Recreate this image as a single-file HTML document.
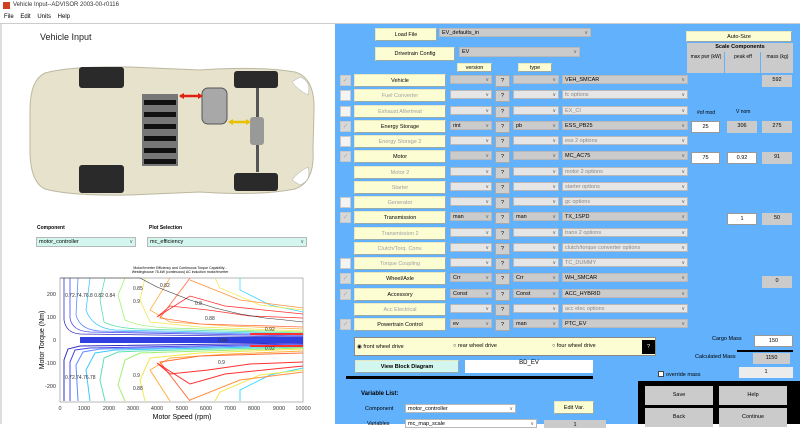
<!DOCTYPE html>
<html><head><meta charset="utf-8"><style>
*{box-sizing:border-box;margin:0;padding:0}
body{width:800px;height:424px;overflow:hidden;background:#fff;font-family:"Liberation Sans",sans-serif;position:relative}
.a{position:absolute}
.btn{position:absolute;background:#fdfdd4;border:1px solid #e8e8c0;border-right-color:#9aa;border-bottom-color:#9aa;font-size:5.5px;display:flex;align-items:center;justify-content:center;color:#000}
.dis{color:#a0a0a0}
.dd{position:absolute;background:#cbcbcb;border:1px solid #b8b8b8;font-size:5.5px;padding-left:2px;line-height:8px;color:#000}
.dd:after{content:"\2228";position:absolute;right:2px;top:0;font-size:5px;color:#666}
.ddl{background:#e6e6e6;color:#888}
.q{position:absolute;background:#cfcfcf;border:1px solid #aaa;font-size:5.5px;display:flex;align-items:center;justify-content:center}
.cb{position:absolute;width:11px;height:11px;background:#d8d8d8;border:1px solid #c8c8c8;font-size:7px;color:#aaa;text-align:center;line-height:9px}
.cbu{background:#f4f4f4}
.gb{position:absolute;background:#cbcbcb;font-size:5.5px;text-align:center;padding-top:2px}
.wb{position:absolute;background:#fff;border:1px solid #999;font-size:5.5px;display:flex;align-items:center;justify-content:center}
.lb{position:absolute;font-size:5.5px}
</style></head><body>
<div class="a" style="left:3px;top:2px;width:7px;height:7px;background:#d04020"></div>
<div class="lb" style="left:13px;top:2px;font-size:6px;color:#333">Vehicle Input--ADVISOR 2003-00-r0116</div>
<div class="lb" style="left:4px;top:14px;font-size:6px">File&nbsp;&nbsp;&nbsp;&nbsp;Edit&nbsp;&nbsp;&nbsp;&nbsp;Units&nbsp;&nbsp;&nbsp;&nbsp;Help</div>
<div class="a" style="left:0;top:23px;width:800px;height:1px;background:#ccc"></div>
<div class="a" style="left:0;top:24px;width:2px;height:400px;background:#ddd"></div>
<div class="lb" style="left:40px;top:32px;font-size:9px;color:#222">Vehicle Input</div>
<svg class="a" style="left:0;top:60px" width="335" height="145" viewBox="0 60 335 145">
<path d="M45,73 Q70,66 130,67 L200,70 Q260,66 295,72 Q315,78 314,110 L313,150 Q315,182 295,189 Q260,196 200,192 L130,195 Q70,196 45,189 Q30,182 30,150 L30,110 Q30,80 45,73Z" fill="#e6e2cc" stroke="#bcb8a0"/>
<path d="M300,77 Q312,82 308,95 Q298,90 292,82Z" fill="#fff" stroke="#aaa" stroke-width=".5"/>
<path d="M300,185 Q312,180 308,167 Q298,172 292,180Z" fill="#fff" stroke="#aaa" stroke-width=".5"/>
<rect x="79" y="67" width="45" height="21" rx="3" fill="#2a2a2a"/>
<rect x="79" y="165" width="45" height="28" rx="3" fill="#2a2a2a"/>
<rect x="234" y="71" width="44" height="17" rx="3" fill="#2a2a2a"/>
<rect x="234" y="173" width="44" height="18" rx="3" fill="#2a2a2a"/>
<rect x="142" y="94" width="36" height="72" fill="#777"/>
<g fill="#111"><rect x="144" y="100" width="32" height="5"/><rect x="144" y="112" width="32" height="5"/><rect x="144" y="124" width="32" height="5"/><rect x="144" y="136" width="32" height="5"/><rect x="144" y="148" width="32" height="5"/><rect x="144" y="159" width="32" height="5"/></g>
<rect x="202" y="88" width="25" height="36" rx="6" fill="#a8a8a8" stroke="#555"/>
<rect x="256" y="88" width="3" height="84" fill="#555"/>
<rect x="250" y="117" width="14" height="28" rx="3" fill="#999"/>
<path d="M180,96 L201,96" stroke="#e02010" stroke-width="2.5"/><path d="M179,96 l5,-3 v6z M203,96 l-5,-3 v6z" fill="#e02010"/>
<path d="M230,122 L249,122" stroke="#e8c000" stroke-width="2.5"/><path d="M228,122 l5,-3 v6z M251,122 l-5,-3 v6z" fill="#e8c000"/>
</svg>
<div class="lb" style="left:37px;top:225px;font-size:5px;font-weight:bold">Component</div>
<div class="lb" style="left:149px;top:225px;font-size:5px;font-weight:bold">Plot Selection</div>
<div class="dd" style="left:36px;top:237px;width:100px;height:10px;background:#d3f6ee">motor_controller</div>
<div class="dd" style="left:147px;top:237px;width:160px;height:10px;background:#d3f6ee">mc_efficiency</div>
<div class="lb" style="left:110px;top:266px;font-size:3.5px;width:140px;text-align:center;line-height:4px">Motor/Inverter Efficiency and Continuous Torque Capability -<br>Westinghouse 75-kW (continuous) AC induction motor/inverter</div>
<svg class="a" style="left:0;top:270px" width="335" height="154" viewBox="0 270 335 154" font-family="Liberation Sans" >
<rect x="60" y="278" width="243" height="124" fill="#fff" stroke="#888" stroke-width=".6"/>
<g fill="none" stroke-width=".8">
<path d="M64,278 L64,320 Q66,333 80,334 L303,337" stroke="#3030c0"/>
<path d="M70,278 L70,318 Q72,331 90,332 L303,336" stroke="#4848f0"/>
<path d="M78,278 L76,315 Q80,330 100,331 L303,335" stroke="#5c8cff"/>
<path d="M90,278 L86,310 Q92,328 115,330 L303,334" stroke="#40c8ff"/>
<path d="M105,278 L100,300 L104,322 Q115,328 140,329 L303,333" stroke="#60e0b0"/>
<path d="M125,278 L118,295 L125,320 Q140,327 170,328 L303,332" stroke="#a0f070"/>
<path d="M145,278 L140,300 L150,322 L200,327 L303,331" stroke="#f0e850"/>
<path d="M170,278 L150,310 L170,322 L230,326 L303,329" stroke="#ffb040"/>
<path d="M190,278 L160,318 L200,324 L303,327" stroke="#ff7040"/>
<path d="M157,317 L170,306 L208,310 L250,316 L303,318 M157,317 L190,296 L225,306 L303,314" stroke="#ff3030"/>
<path d="M240,278 L240,290 L270,305 L303,312" stroke="#40d8ff"/>
<path d="M215,278 L220,288 L260,305 L303,310" stroke="#f0e850"/>
<path d="M190,280 L240,300 L303,308" stroke="#ff9040"/>
</g>
<g fill="none" stroke-width="1">
<polyline points="64,401 64,360 68,349 80,346 303,343" stroke="#3030c0"/>
<polyline points="70,401 70,362 75,350 90,348 303,344" stroke="#4848f0"/>
<polyline points="78,401 76,365 83,352 100,349 303,345" stroke="#5c8cff"/>
<polyline points="90,401 86,370 95,353 115,350 303,346" stroke="#40c8ff"/>
<polyline points="105,401 100,380 104,358 118,352 140,351 303,347" stroke="#60e0b0"/>
<polyline points="125,401 118,385 125,360 140,353 170,352 303,348" stroke="#a0f070"/>
<polyline points="145,401 140,380 150,358 200,353 303,349" stroke="#f0e850"/>
<polyline points="170,401 150,370 170,358 230,354 303,351" stroke="#ffb040"/>
<polyline points="190,401 160,362 200,356 303,353" stroke="#ff7040"/>
<polyline points="303,362 250,364 208,370 170,374 157,363 190,384 225,374 303,366" stroke="#ff3030"/>
<polyline points="240,401 240,390 270,375 303,368" stroke="#40d8ff"/>
<polyline points="215,401 220,392 260,375 303,370" stroke="#f0e850"/>
<polyline points="190,400 240,380 303,372" stroke="#ff9040"/>
</g>
<rect x="80" y="337" width="223" height="6" fill="#3040e0"/>
<rect x="250" y="333" width="53" height="2" fill="#ff3030"/><rect x="250" y="345" width="53" height="2" fill="#ff3030"/>
<polyline points="60,278 140,278 157,287 190,300 215,308 240,314 265,318 285,320 303,322" fill="none" stroke="#333" stroke-width=".6"/>
<g font-size="5" fill="#333"><text x="65" y="297">0.72.74.76.8 0.82 0.84</text><text x="133" y="303">0.9</text><text x="133" y="290">0.85</text><text x="160" y="287">0.82</text><text x="195" y="305">0.8</text><text x="205" y="320">0.88</text><text x="265" y="331">0.92</text><text x="218" y="342">0.84</text><text x="265" y="350">0.92</text><text x="218" y="364">0.9</text><text x="133" y="377">0.9</text><text x="133" y="390">0.88</text><text x="65" y="379">0.72.74.76.78</text></g>
<g font-size="5.5" fill="#333" text-anchor="end"><text x="56" y="296">200</text><text x="56" y="319">100</text><text x="56" y="342">0</text><text x="56" y="365">-100</text><text x="56" y="388">-200</text></g>
<g font-size="5.5" fill="#333" text-anchor="middle"><text x="60" y="410">0</text><text x="84" y="410">1000</text><text x="109" y="410">2000</text><text x="133" y="410">3000</text><text x="157" y="410">4000</text><text x="182" y="410">5000</text><text x="206" y="410">6000</text><text x="230" y="410">7000</text><text x="254" y="410">8000</text><text x="279" y="410">9000</text><text x="303" y="410">10000</text></g>
<text x="182" y="419" font-size="7" text-anchor="middle">Motor Speed (rpm)</text>
<text transform="translate(44,340) rotate(-90)" font-size="7" text-anchor="middle">Motor Torque (Nm)</text>
</svg>
<div class="a" style="left:335px;top:24px;width:465px;height:400px;background:#62b1fd"></div>
<div class="btn" style="left:375px;top:28px;width:62px;height:13px">Load File</div>
<div class="dd" style="left:439px;top:28px;width:152px;height:9px">EV_defaults_in</div>
<div class="btn" style="left:375px;top:47px;width:80px;height:14px">Drivetrain Config</div>
<div class="dd" style="left:459px;top:47px;width:121px;height:10px">EV</div>
<div class="btn" style="left:457px;top:63px;width:35px;height:9px">version</div>
<div class="btn" style="left:518px;top:63px;width:34px;height:9px">type</div>
<div id="rows"></div>
<div class="btn" style="left:686px;top:31px;width:106px;height:11px">Auto-Size</div>
<div class="gb" style="left:687px;top:43px;width:106px;height:30px;font-weight:bold;padding-top:1px">Scale Components</div>
<div class="gb" style="left:688px;top:52px;width:37px;height:21px;border-right:1px solid #62b1fd;font-size:5px">max pwr (kW)</div>
<div class="gb" style="left:726px;top:52px;width:35px;height:21px;border-right:1px solid #62b1fd;font-size:5px">peak eff</div>
<div class="gb" style="left:762px;top:52px;width:31px;height:21px;font-size:5px">mass (kg)</div>
<div class="gb" style="left:762px;top:75px;width:30px;height:12px">592</div>
<div class="lb" style="left:697px;top:110px;font-size:5px">#of mod</div>
<div class="lb" style="left:736px;top:109px;font-size:5px">V nom</div>
<div class="wb" style="left:691px;top:121px;width:29px;height:12px">25</div>
<div class="gb" style="left:727px;top:121px;width:30px;height:12px">306</div>
<div class="gb" style="left:762px;top:121px;width:30px;height:12px">275</div>
<div class="wb" style="left:691px;top:152px;width:29px;height:12px">75</div>
<div class="wb" style="left:727px;top:152px;width:30px;height:12px">0.92</div>
<div class="gb" style="left:762px;top:152px;width:30px;height:12px">91</div>
<div class="wb" style="left:727px;top:213px;width:30px;height:12px">1</div>
<div class="gb" style="left:762px;top:213px;width:30px;height:12px">50</div>
<div class="gb" style="left:762px;top:276px;width:30px;height:12px">0</div>
<div class="a" style="left:354px;top:337px;width:302px;height:19px;background:#fdfdd4;border:1px solid #888"></div>
<div class="lb" style="left:357px;top:344px;font-size:5.5px">&#9673; front wheel drive</div>
<div class="lb" style="left:453px;top:343px;font-size:5.5px">&#9675; rear wheel drive</div>
<div class="lb" style="left:552px;top:343px;font-size:5.5px">&#9675; four wheel drive</div>
<div class="a" style="left:642px;top:340px;width:13px;height:14px;background:#000;color:#fff;font-size:5.5px;text-align:center;line-height:14px">?</div>
<div class="btn" style="left:355px;top:360px;width:104px;height:13px;background:#d3f6ee;font-weight:bold">View Block Diagram</div>
<div class="a" style="left:465px;top:360px;width:128px;height:13px;background:#fff;font-size:6px;text-align:center">BD_EV</div>
<div class="a" style="left:346px;top:376px;width:247px;height:3px;background:#000"></div>
<div class="lb" style="left:361px;top:391px;font-size:6px;font-weight:bold">Variable List:</div>
<div class="lb" style="left:365px;top:406px">Component</div>
<div class="dd" style="left:405px;top:404px;width:111px;height:9px;background:#fff">motor_controller</div>
<div class="btn" style="left:554px;top:401px;width:40px;height:13px">Edit Var.</div>
<div class="lb" style="left:367px;top:421px">Variables</div>
<div class="dd" style="left:405px;top:419px;width:132px;height:9px;background:#fff">mc_map_scale</div>
<div class="gb" style="left:544px;top:420px;width:62px;height:8px">1</div>
<div class="lb" style="left:712px;top:336px">Cargo Mass</div>
<div class="wb" style="left:754px;top:335px;width:39px;height:12px">150</div>
<div class="a" style="left:737px;top:350px;width:56px;height:2px;background:#000"></div>
<div class="lb" style="left:695px;top:354px">Calculated  Mass</div>
<div class="gb" style="left:753px;top:353px;width:37px;height:11px">1150</div>
<div class="a" style="left:658px;top:371px;width:6px;height:6px;background:#fff;border:1px solid #444"></div>
<div class="lb" style="left:666px;top:372px">override mass</div>
<div class="gb" style="left:739px;top:367px;width:54px;height:11px;background:#ececec">1</div>
<div class="a" style="left:638px;top:381px;width:162px;height:43px;background:#000"></div>
<div class="gb" style="left:645px;top:386px;width:68px;height:19px;padding-top:6px">Save</div>
<div class="gb" style="left:719px;top:386px;width:68px;height:19px;padding-top:6px">Help</div>
<div class="gb" style="left:645px;top:408px;width:68px;height:19px;padding-top:6px">Back</div>
<div class="gb" style="left:719px;top:408px;width:68px;height:19px;padding-top:6px">Continue</div>
<script>
var R=[["Vehicle",1,"c","","","VEH_SMCAR"],["Fuel Converter",0,"u","","","fc options"],["Exhaust Aftertreat",0,"u","","","EX_CI"],["Energy Storage",1,"c","rint","pb","ESS_PB25"],["Energy Storage 2",0,"u","","","ess 2 options"],["Motor",1,"c","","","MC_AC75"],["Motor 2",0,"","","","motor 2 options"],["Starter",0,"","","","starter options"],["Generator",0,"u","","","gc options"],["Transmission",1,"c","man","man","TX_1SPD"],["Transmission 2",0,"","","","trans 2 options"],["Clutch/Torq. Conv.",0,"","","","clutch/torque converter options"],["Torque Coupling",0,"u","","","TC_DUMMY"],["Wheel/Axle",1,"c","Crr","Crr","WH_SMCAR"],["Accessory",1,"c","Const","Const","ACC_HYBRID"],["Acc Electrical",0,"","","","acc elec options"],["Powertrain Control",1,"c","ev","man","PTC_EV"]];
var h="";R.forEach(function(r,i){var t=Math.round(74+i*15.25);var l=r[1]?"":" ddl";
if(r[2])h+='<div class="cb'+(r[2]=="u"?" cbu":"")+'" style="left:340px;top:'+(t+1)+'px">'+(r[2]=="c"?"&#10003;":"")+'</div>';
h+='<div class="btn'+(r[1]?"":" dis")+'" style="left:354px;top:'+t+'px;width:92px;height:13px">'+r[0]+'</div>';
h+='<div class="dd'+l+'" style="left:450px;top:'+(t+1)+'px;width:42px;height:9px">'+r[3]+'</div>';
h+='<div class="q" style="left:495px;top:'+(t+1)+'px;width:15px;height:12px">?</div>';
h+='<div class="dd'+l+'" style="left:513px;top:'+(t+1)+'px;width:46px;height:9px">'+r[4]+'</div>';
h+='<div class="dd'+l+'" style="left:562px;top:'+(t+1)+'px;width:126px;height:9px">'+r[5]+'</div>';});
document.getElementById("rows").outerHTML=h;
</script>
</body></html>
